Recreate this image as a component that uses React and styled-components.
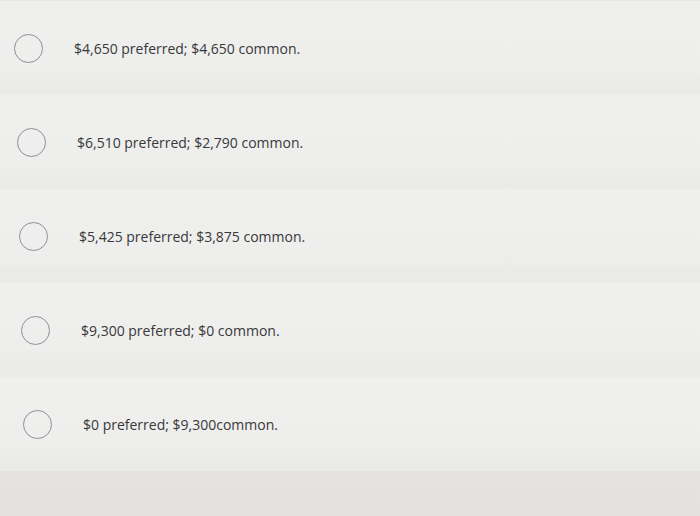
import React from "react";
import styled, { createGlobalStyle } from "styled-components";

const GlobalStyle = createGlobalStyle`
  html, body {
    margin: 0;
    padding: 0;
    background: #e6e5e4;
  }
  body {
    font-family: "Open Sans", "Liberation Sans", sans-serif;
  }
`;

const choices = [
  { label: "$4,650 preferred; $4,650 common.", indent: 0 },
  { label: "$6,510 preferred; $2,790 common.", indent: 3 },
  { label: "$5,425 preferred; $3,875 common.", indent: 5 },
  { label: "$9,300 preferred; $0 common.", indent: 7 },
  { label: "$0 preferred; $9,300common.", indent: 9 },
];

const App = () => {
  return (
    <>
      <GlobalStyle />
      <List>
        {choices.map((c, i) => (
          <Choice key={i} indent={c.indent}>
            <Radio />
            <Label>{c.label}</Label>
          </Choice>
        ))}
      </List>
    </>
  );
};

const List = styled.div`
  width: 700px;
  height: 516px;
  overflow: hidden;
  display: flex;
  flex-direction: column;
  padding-top: 1px;
  box-sizing: border-box;
  background: linear-gradient(to bottom, #e9e8e7 0%, #e3e2e1 100%);
`;

const Choice = styled.label`
  height: 94px;
  flex-shrink: 0;
  display: flex;
  align-items: center;
  box-sizing: border-box;
  padding-left: ${(p) => 14 + p.indent}px;
  gap: 31px;
  cursor: pointer;
  background: linear-gradient(
    to bottom,
    #efefee 0%,
    #eeeeed 70%,
    #eaeae9 90%,
    #ebebea 100%
  );
`;

const Radio = styled.span`
  width: 29px;
  height: 29px;
  box-sizing: border-box;
  border-radius: 50%;
  border: 1.6px solid #8e8e98;
  flex-shrink: 0;
`;

const Label = styled.span`
  font-size: 14px;
  color: #38383a;
`;

export default App;
